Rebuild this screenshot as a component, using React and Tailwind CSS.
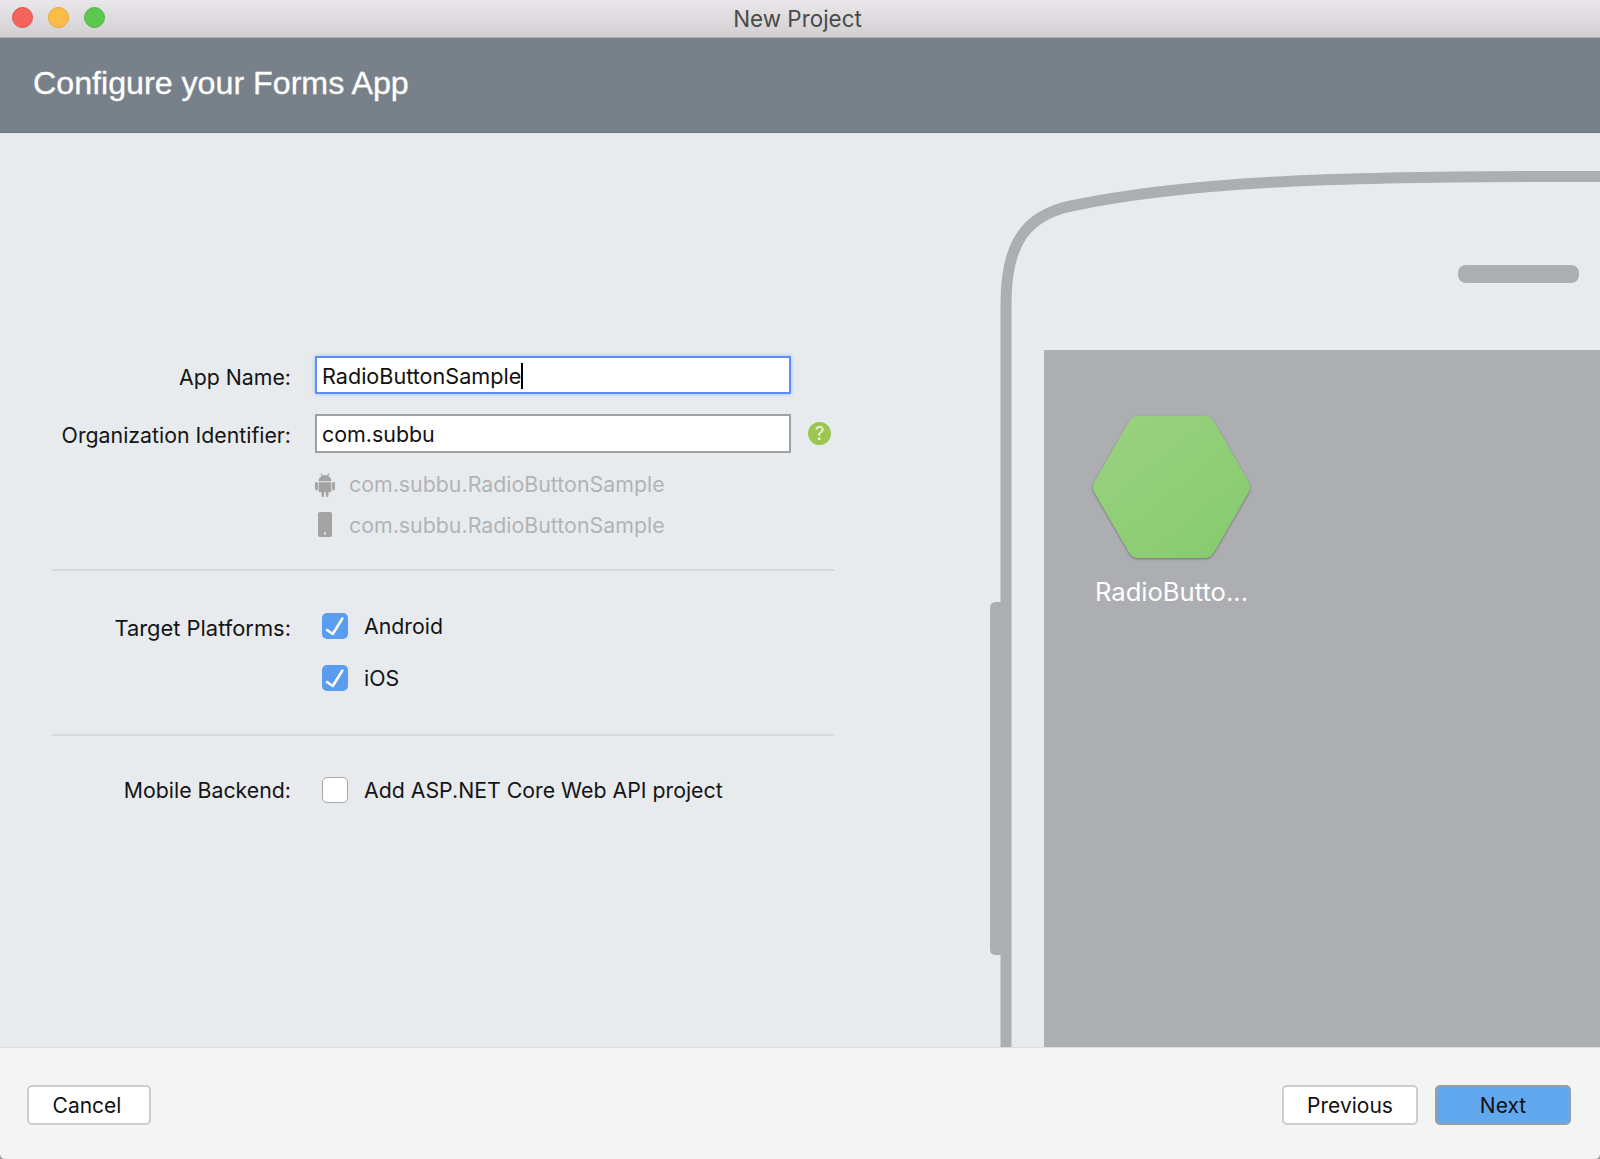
const ui = '"Inter", "Liberation Sans", sans-serif';

function Check() {
  return (
    <svg width="26" height="26" viewBox="0 0 26 26" className="block">
      <path d="M5 17 L10.8 21 L20.3 5.6" fill="none" stroke="#fff" strokeWidth="2.6" strokeLinecap="round" strokeLinejoin="round" />
    </svg>
  );
}

function Field({ label, children, className, labelClass }) {
  return (
    <div className={"flex items-center " + (className || "")}>
      <div className={"w-[291px] shrink-0 text-right text-[21.3px] leading-[26px] text-[#141414] " + (labelClass || "")}>{label}</div>
      <div className="ml-[24px] flex items-center flex-1">{children}</div>
    </div>
  );
}

function Hint({ icon, children }) {
  return (
    <div className="flex items-center h-[41px] pl-[315px]">
      <div className="w-[20px] flex justify-center">{icon}</div>
      <span className="ml-[14px] text-[21.35px] text-[#b2b3b5]">{children}</span>
    </div>
  );
}

function CheckRow({ checked, children, className }) {
  return (
    <div className={"flex items-center h-[26px] " + (className || "")}>
      <div className={"ml-[7px] w-[26px] h-[26px] rounded-[5px] " + (checked ? "bg-[#5a9cf0]" : "bg-white border border-[#a8a8a8]")}>
        {checked ? <Check /> : null}
      </div>
      <span className="ml-[16px] text-[21.3px] leading-[26px] text-[#141414]">{children}</span>
    </div>
  );
}

export default function App() {
  return (
    <div className="w-[1600px] h-[1159px] flex flex-col overflow-hidden bg-[#9a9a9a]" style={{ fontFamily: ui }}>
      <div className="relative h-[38px] shrink-0 bg-gradient-to-b from-[#e9e7e9] to-[#d1cfd1] border-b border-[#b0b0b2] flex items-center justify-center text-[22.4px] text-[#4a4a4a] pr-[5px]">
        New Project
        <div className="absolute left-[12px] top-[7px] flex gap-[15px]">
          <span className="w-[21px] h-[21px] rounded-full bg-[#f2645c] border border-[#e0524b]" />
          <span className="w-[21px] h-[21px] rounded-full bg-[#fbbd45] border border-[#e5a63a]" />
          <span className="w-[21px] h-[21px] rounded-full bg-[#5cc84f] border border-[#4fb645]" />
        </div>
      </div>

      <div className="h-[95px] shrink-0 bg-[#78818a] border-b border-[#6a727b] flex items-center pl-[33px] pb-[4px]">
        <h1 className="text-[32.2px] text-white [-webkit-text-stroke:0.3px_white]" style={{ fontFamily: '"Liberation Sans", sans-serif' }}>Configure your Forms App</h1>
      </div>

      <div className="flex flex-1 min-h-0 bg-[#e8ebee] border-b border-[#dcdde0]">
        <div className="w-[990px] shrink-0 pt-[223px]">
          <Field label="App Name:" labelClass="pt-[3px]">
            <div className="w-[476px] h-[38px] bg-white border-2 border-[#5b8ff0] shadow-[0_0_4px_#9dbdf5] flex items-center pl-[5px] pt-[2px] text-[21.6px] text-[#111]">
              RadioButtonSample<span className="w-[1.5px] h-[26px] bg-black" />
            </div>
          </Field>
          <Field label="Organization Identifier:" labelClass="pt-[2px]" className="mt-[20px]">
            <div className="w-[476px] h-[39px] bg-white border-2 border-[#a0a0a0] flex items-center pl-[5px] pt-[2px] text-[21.4px] text-[#111]">
              com.subbu
            </div>
            <div className="ml-[17px] w-[23px] h-[23px] rounded-full bg-[#9cc552] text-[#eef5df] flex items-center justify-center text-[18px] font-normal leading-none">?</div>
          </Field>
          <div className="mt-[11px]">
            <Hint icon={
              <svg width="20" height="24" viewBox="0 0 20 24" fill="#a3a3a4">
                <path d="M3.6 8.2 C3.6 5.4 5.3 3.7 6.9 3 L5.5 .9 L6.4 .3 L7.9 2.6 C9.3 2.2 10.7 2.2 12.1 2.6 L13.6 .3 L14.5 .9 L13.1 3 C14.7 3.7 16.4 5.4 16.4 8.2 Z" />
                <path d="M3.6 9.2 H16.4 V18 Q16.4 19.2 15.2 19.2 H13.5 V22.4 Q13.5 24 12.2 24 Q10.9 24 10.9 22.4 V19.2 H9.1 V22.4 Q9.1 24 7.8 24 Q6.5 24 6.5 22.4 V19.2 H4.8 Q3.6 19.2 3.6 18 Z" />
                <rect x="0" y="9" width="2.8" height="8.5" rx="1.4" />
                <rect x="17.2" y="9" width="2.8" height="8.5" rx="1.4" />
              </svg>
            }>com.subbu.RadioButtonSample</Hint>
            <Hint icon={
              <svg width="14" height="25" viewBox="0 0 14 25" className="mb-[2px]">
                <rect width="14" height="25" rx="2" fill="#a3a3a4" />
                <rect x="6" y="20.5" width="2" height="2" fill="#e8ebee" />
              </svg>
            }>com.subbu.RadioButtonSample</Hint>
          </div>
          <div className="mt-[23px] ml-[52px] w-[782px] h-[2px] bg-[#d8d9dc]" />
          <div className="mt-[42px] flex">
            <div className="w-[291px] shrink-0 text-right text-[21.9px] text-[#141414] leading-[30px]">Target Platforms:</div>
            <div className="ml-[24px]">
              <CheckRow checked>Android</CheckRow>
              <CheckRow checked className="mt-[26px]">iOS</CheckRow>
            </div>
          </div>
          <div className="mt-[43px] ml-[52px] w-[782px] h-[2px] bg-[#d8d9dc]" />
          <div className="mt-[41px]">
            <Field label="Mobile Backend:">
              <CheckRow>Add ASP.NET Core Web API project</CheckRow>
            </Field>
          </div>
        </div>

        <div className="relative flex-1 min-w-0 overflow-hidden pl-[54px] pt-[217px] flex">
          <svg className="absolute left-0 top-0" width="610" height="914" viewBox="0 0 610 914">
            <path d="M16 914 V170 C16 108 38 82 81 73 C200 48 350 43 610 43.5" fill="none" stroke="#acaeb1" strokeWidth="11" />
            <rect x="468" y="132" width="121" height="18" rx="8" fill="#acaeb1" />
            <path d="M16 469 H6 Q0 469 0 475 V816 Q0 822 6 822 H16 Z" fill="#acaeb1" />
          </svg>
          <div className="relative flex-1 bg-[#acaeb1] pt-[66px] pl-[49px]">
            <svg width="157" height="145" viewBox="0 0 157 145" className="block drop-shadow-[0_1px_1px_rgba(0,0,0,0.35)]">
              <defs>
                <linearGradient id="hex" gradientUnits="userSpaceOnUse" x1="20" y1="0" x2="137" y2="142">
                  <stop offset="0" stopColor="#9ad180" />
                  <stop offset="1" stopColor="#87cb6e" />
                </linearGradient>
              </defs>
              <polygon points="45.6,11 111.4,11 146,71 111.4,131 45.6,131 11,71" fill="url(#hex)" stroke="url(#hex)" strokeWidth="22" strokeLinejoin="round" />
            </svg>
            <div className="w-[157px] mt-[14px] text-center text-[25.6px] leading-[34px] text-white whitespace-nowrap">RadioButto...</div>
          </div>
        </div>
      </div>

      <div className="h-[111px] shrink-0 bg-[#f4f4f4] rounded-b-[5px] flex items-start justify-between pt-[37px] pl-[27px] pr-[29px] text-[21px] text-[#111]">
        <button className="w-[124px] h-[40px] rounded-[5px] bg-white border-2 border-[#cdcdcd] pt-[2px] pr-[4px]">Cancel</button>
        <div className="flex gap-[17px]">
          <button className="w-[136px] h-[40px] rounded-[5px] bg-white border-2 border-[#cdcdcd] pt-[2px]">Previous</button>
          <button className="w-[136px] h-[40px] rounded-[5px] bg-[#62a8ee] border-2 border-[#9a9ea3] pt-[2px]">Next</button>
        </div>
      </div>
    </div>
  );
}
